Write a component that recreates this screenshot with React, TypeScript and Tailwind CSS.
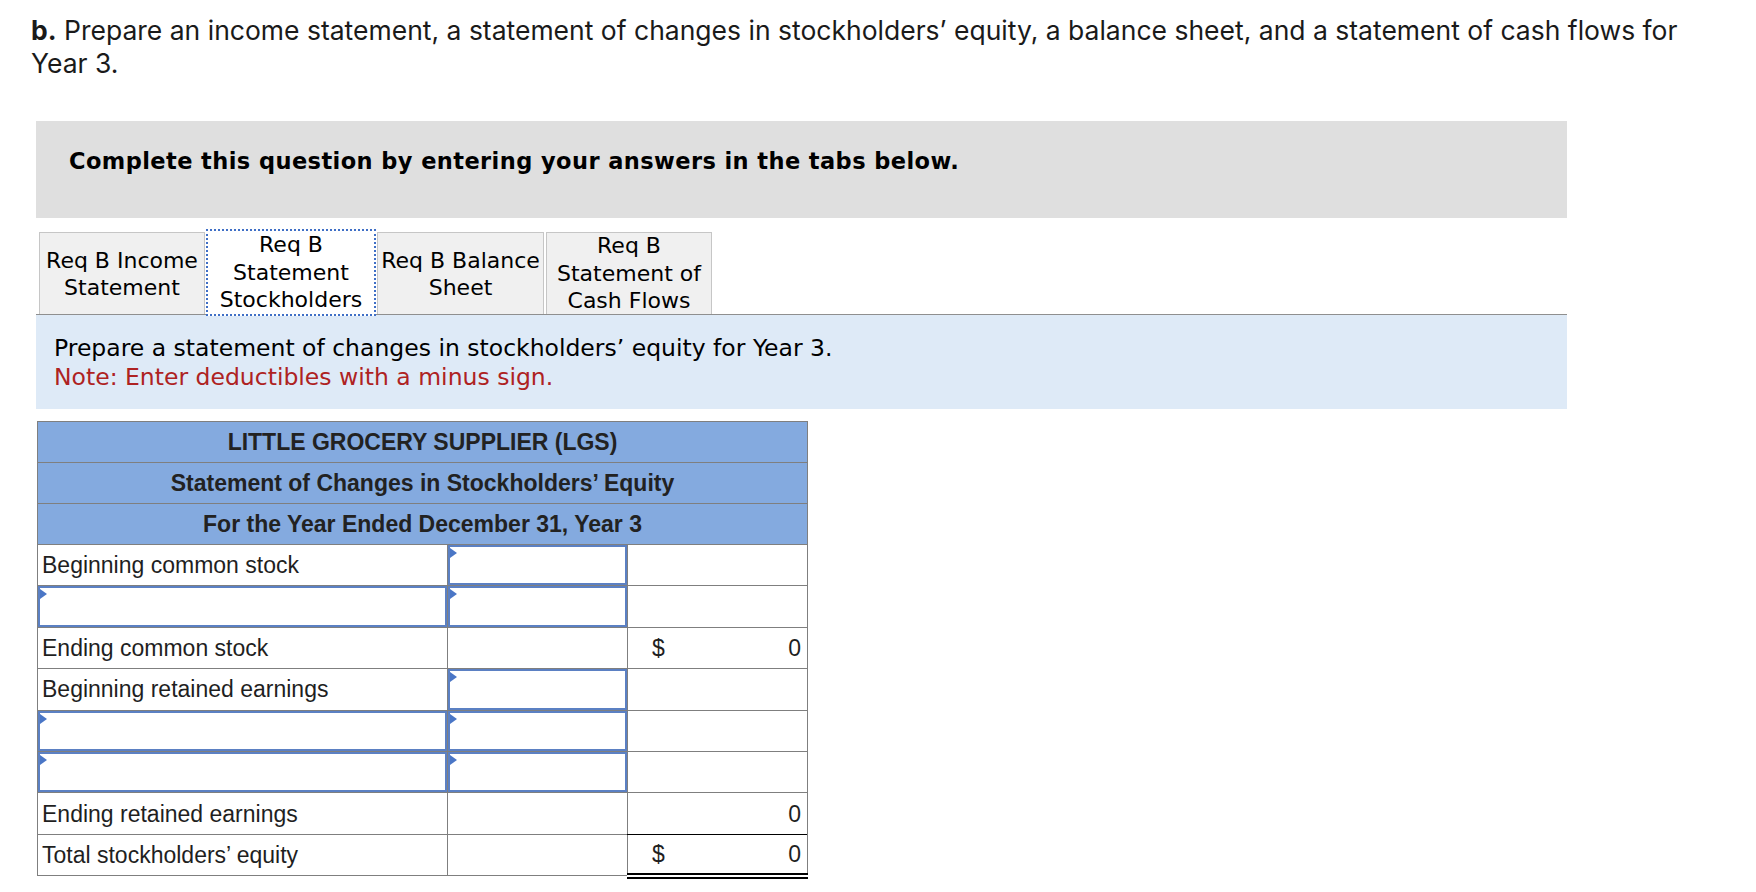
import React from "react";

const tabFont = { fontFamily: '"DejaVu Sans", Verdana, sans-serif' };

function Tri() {
  return (
    <span className="absolute left-0 top-[1px] h-0 w-0 border-y-[5px] border-l-[7px] border-y-transparent border-l-[#4a76c6]" />
  );
}

function InputBox() {
  return (
    <div className="relative h-full w-full border-2 border-[#5b80c3] bg-white">
      <Tri />
    </div>
  );
}

type Row = {
  label?: string;
  labelInput?: boolean;
  mid?: "input" | "empty";
  midTopBlack?: boolean;
  dollar?: boolean;
  value?: string;
  totalLine?: boolean;
};

const rows: Row[] = [
  { label: "Beginning common stock", mid: "input" },
  { labelInput: true, mid: "input" },
  { label: "Ending common stock", mid: "empty", midTopBlack: true, dollar: true, value: "0" },
  { label: "Beginning retained earnings", mid: "input" },
  { labelInput: true, mid: "input" },
  { labelInput: true, mid: "input" },
  { label: "Ending retained earnings", mid: "empty", midTopBlack: true, value: "0" },
  { label: "Total stockholders\u2019 equity", mid: "empty", dollar: true, value: "0", totalLine: true },
];

export default function App() {
  return (
    <div className="min-h-screen w-full bg-white pt-[14px]">
      <p
        className="ml-[31px] text-[26.5px] leading-[33px] text-[#1a1a1a]"
        style={{ fontFamily: 'Inter, "Open Sans", sans-serif' }}
      >
        <b className="font-bold">b.</b> Prepare an income statement, a statement of changes in stockholders{"\u2019"} equity, a
        balance sheet, and a statement of cash flows for
        <br />
        Year 3.
      </p>

      <div className="ml-[36px] mt-[41px] h-[97px] w-[1531px] bg-[#dfdfdf] pl-[33px] pt-[27px]">
        <p className="text-[22.5px] font-bold leading-[26px] tracking-[0.42px] text-black" style={tabFont}>
          Complete this question by entering your answers in the tabs below.
        </p>
      </div>

      <div className="ml-[39px] mt-[11px] flex items-end gap-[1px]" style={tabFont}>
        <div className="flex h-[82px] w-[166px] items-center justify-center border border-b-0 border-[#c6c6c6] bg-[#f0f0f0] text-center text-[22px] leading-[27px] text-black">
          Req B Income
          <br />
          Statement
        </div>
        <div className="relative z-10 -mb-[2px] flex h-[87px] w-[170px] items-center justify-center border-2 border-dotted border-[#3f6fc6] bg-white text-center text-[22px] leading-[27.5px] text-black">
          Req B
          <br />
          Statement
          <br />
          Stockholders
        </div>
        <div className="flex h-[82px] w-[167px] items-center justify-center border border-b-0 border-[#c6c6c6] bg-[#f0f0f0] text-center text-[22px] leading-[27px] text-black">
          Req B Balance
          <br />
          Sheet
        </div>
        <div className="ml-[1px] flex h-[82px] w-[166px] items-center justify-center border border-b-0 border-[#c6c6c6] bg-[#f0f0f0] text-center text-[22px] leading-[27.5px] text-black">
          Req B
          <br />
          Statement of
          <br />
          Cash Flows
        </div>
      </div>

      <div className="ml-[36px] h-[95px] w-[1531px] border-t border-[#8f8f8f] bg-[#deeaf7] pl-[18px] pt-[19px]" style={tabFont}>
        <p className="text-[23.5px] leading-[29px] text-black">
          Prepare a statement of changes in stockholders{"\u2019"} equity for Year 3.
        </p>
        <p className="text-[23.5px] leading-[29px] text-[#ae2222]">Note: Enter deductibles with a minus sign.</p>
      </div>

      <table
        className="ml-[37px] mt-[12px] w-[770px] table-fixed border-collapse text-[#1f1f1f]"
        style={{ fontFamily: '"Liberation Sans", Arial, sans-serif' }}
      >
        <colgroup>
          <col className="w-[410px]" />
          <col className="w-[180px]" />
          <col className="w-[180px]" />
        </colgroup>
        <thead>
          {[
            "LITTLE GROCERY SUPPLIER (LGS)",
            "Statement of Changes in Stockholders\u2019 Equity",
            "For the Year Ended December 31, Year 3",
          ].map((t) => (
            <tr key={t} className="h-[41px]">
              <th
                colSpan={3}
                className="border border-[#7f7f7f] bg-[#84aadf] p-0 text-center text-[23px] font-bold leading-[26px] text-[#222]"
              >
                {t}
              </th>
            </tr>
          ))}
        </thead>
        <tbody>
          {rows.map((r, i) => (
            <tr key={i} className="h-[41.4px]">
              <td className="h-[41.4px] border border-[#7f7f7f] p-0 align-middle">
                {r.labelInput ? (
                  <div className="h-[40.4px]">
                    <InputBox />
                  </div>
                ) : (
                  <span className="block pl-[4px] text-[23px] leading-[26px]">{r.label}</span>
                )}
              </td>
              <td
                className={
                  "h-[41.4px] border border-[#7f7f7f] p-0 align-middle " +
                  (r.midTopBlack ? "border-t-black" : "")
                }
              >
                {r.mid === "input" ? (
                  <div className="h-[40.4px]">
                    <InputBox />
                  </div>
                ) : null}
              </td>
              <td
                className={
                  "h-[41.4px] border border-[#7f7f7f] p-0 align-middle " +
                  (r.totalLine ? "border-t-black border-b-[6px] border-b-black border-double" : "")
                }
              >
                <div className="flex items-center justify-between pl-[24px] pr-[6px] text-[23px] leading-[26px]">
                  <span>{r.dollar ? "$" : ""}</span>
                  <span>{r.value ?? ""}</span>
                </div>
              </td>
            </tr>
          ))}
        </tbody>
      </table>
    </div>
  );
}
